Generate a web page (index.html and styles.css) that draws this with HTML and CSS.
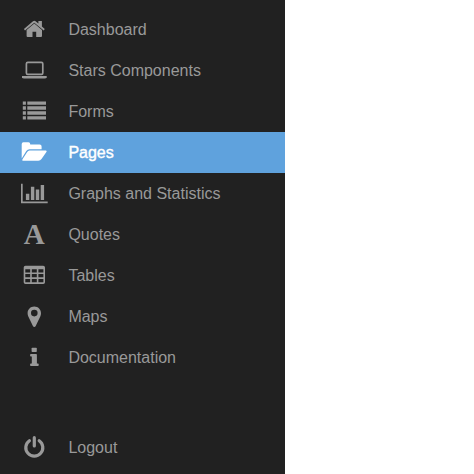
FILE: index.html
```html
<!DOCTYPE html>
<html lang="en">
<head>
<meta charset="utf-8">
<title>Dashboard</title>
<link rel="stylesheet" href="styles.css">
</head>
<body>
<nav class="sidebar">
  <a class="item"><svg class="icon" viewBox="0 0 32 41"><path d="M16.3 14.6 L24 21 V27 Q24 28 23 28 H18.2 V22.7 H14.5 V28 H9.6 Q8.6 28 8.6 27 V21Z"/><path d="M5.9 20 L15 12.2 Q16.3 11.1 17.6 12.2 L20.4 14.6 V12 H23.9 V17.5 L26.8 20 L25.7 21.4 L16.3 13.8 L7 21.4Z"/></svg><span>Dashboard</span></a>
  <a class="item"><svg class="icon" viewBox="0 0 32 41"><rect class="line" x="8.4" y="12.4" width="16.4" height="12" rx="1.4"/><path d="M4 26.1H28.7V27.2Q28.4 28.5 26.5 28.5H6.2Q4.3 28.5 4 27.2Z"/></svg><span>Stars Components</span></a>
  <a class="item"><svg class="icon" viewBox="0 0 32 41"><path d="M4.8 10.4h3.1v3.4H4.8zM9.3 10.4H28v3.4H9.3zM4.8 15.3h3.1v3.4H4.8zM9.3 15.3H28v3.4H9.3zM4.8 20.3h3.1v3.4H4.8zM9.3 20.3H28v3.4H9.3zM4.8 25.2h3.1v3.4H4.8zM9.3 25.2H28v3.4H9.3z"/></svg><span>Forms</span></a>
  <a class="item active"><svg class="icon" viewBox="0 0 32 41"><path d="M3.7 26.5V12Q3.7 10.3 5.4 10.3H10.5Q12.2 10.3 12.2 12V12.6H21.7Q23.6 12.6 23.6 14.4V17.2H11.5Q9.6 17.2 8.3 18.9Z"/><path d="M11.5 18.4H27.8Q29.4 18.4 28.4 19.9L23.5 27Q22.3 28.8 20.3 28.8H5.2Q3.5 28.8 4.5 27.3L9.2 19.9Q10.1 18.4 11.5 18.4Z"/></svg><span>Pages</span></a>
  <a class="item"><svg class="icon" viewBox="0 0 32 41"><path d="M3 10.7H4.7V28.6H29.7V30.3H3zM7.9 20.7h3.4V27H7.9zM12.9 13.7h3.4V27h-3.4zM17.8 16.4h3.4V27h-3.4zM22.7 12h3.4v15h-3.4z"/></svg><span>Graphs and Statistics</span></a>
  <a class="item"><svg class="icon" viewBox="0 0 32 41"><text class="letter" x="16.3" y="30" text-anchor="middle">A</text></svg><span>Quotes</span></a>
  <a class="item"><svg class="icon" viewBox="0 0 32 41"><path fill-rule="evenodd" d="M7.5 10.7H25.2Q27 10.7 27 12.5V27.2Q27 29 25.2 29H7.5Q5.7 29 5.7 27.2V12.5Q5.7 10.7 7.5 10.7ZM7.3 14.3v3.1h4.9v-3.1zM13.8 14.3v3.1h5v-3.1zM20.4 14.3v3.1h5v-3.1zM7.3 19v3.2h4.9V19zM13.8 19v3.2h5V19zM20.4 19v3.2h5V19zM7.3 23.9v3.4h4.9v-3.4zM13.8 23.9v3.4h5v-3.4zM20.4 23.9v3.4h5v-3.4z"/></svg><span>Tables</span></a>
  <a class="item"><svg class="icon" viewBox="0 0 32 41"><path fill-rule="evenodd" d="M16.3 10.6C20.1 10.6 23 13.5 23 17.2Q23 18.9 22.4 20.2L17.7 30Q17.2 30.9 16.3 30.9T14.9 30L10.2 20.2Q9.6 18.9 9.6 17.2C9.6 13.5 12.5 10.6 16.3 10.6ZM16.3 13.8A3.3 3.3 0 1 0 16.3 20.4A3.3 3.3 0 1 0 16.3 13.8Z"/></svg><span>Maps</span></a>
  <a class="item"><svg class="icon" viewBox="0 0 32 41"><rect x="13.6" y="10.8" width="5.2" height="4.1" rx=".7"/><path d="M12.9 17H18.1Q18.9 17 18.9 17.8V26.4H19.9Q20.7 26.4 20.7 27.2V28.3Q20.7 29.1 19.9 29.1H12.9Q12.1 29.1 12.1 28.3V27.2Q12.1 26.4 12.9 26.4H13.8V19.6H12.9Q12.1 19.6 12.1 18.8V17.8Q12.1 17 12.9 17Z"/></svg><span>Documentation</span></a>
  <a class="item logout"><svg class="icon" viewBox="0 0 32 41"><path class="power" d="M11.4 13.7A8.5 8.5 0 1 0 21.2 13.7M16.3 10.7V19"/></svg><span>Logout</span></a>
</nav>
</body>
</html>
```
FILE: styles.css
```css
body {
  margin: 0;
  background: #fff;
  font: 16px/41px "Liberation Sans", Arial, sans-serif;
}

.sidebar {
  box-sizing: border-box;
  width: 285px;
  height: 474px;
  padding-top: 9px;
  display: flex;
  flex-direction: column;
  background: #212121;
}

.item {
  display: flex;
  gap: 18.4px;
  height: 41px;
  padding-left: 18px;
  color: #999;
  white-space: nowrap;
}

.active {
  background: #5fa2dd;
  color: #fff;
  -webkit-text-stroke: 0.4px #fff;
}

.logout {
  margin-top: 49px;
}

.icon {
  flex: none;
  width: 32px;
  height: 41px;
  fill: currentColor;
  -webkit-text-stroke: 0;
}

.line {
  fill: none;
  stroke: currentColor;
  stroke-width: 1.7;
}

.power {
  fill: none;
  stroke: currentColor;
  stroke-width: 3.2;
  stroke-linecap: round;
}

.letter {
  font: bold 29px "Liberation Serif", serif;
}
```
